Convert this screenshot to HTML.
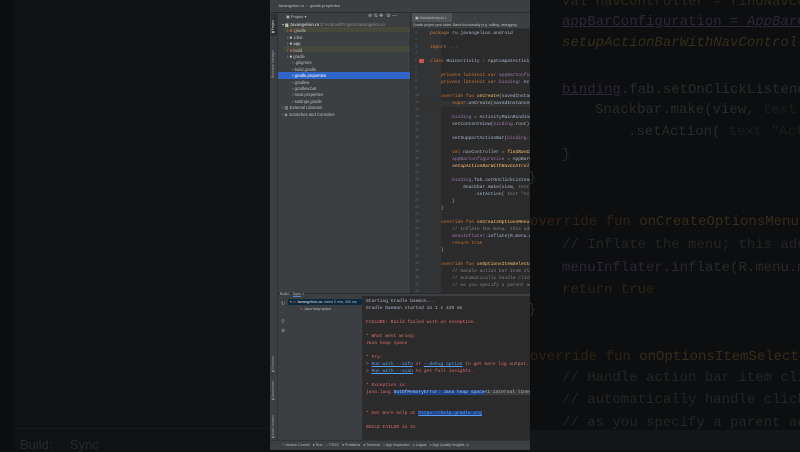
<!DOCTYPE html>
<html><head><meta charset="utf-8"><style>
*{margin:0;padding:0;box-sizing:border-box}
body{width:800px;height:450px;overflow:hidden;background:#0e1213;position:relative;font-family:"Liberation Sans",sans-serif}
.a{position:absolute;white-space:nowrap}
.m{font-family:"Liberation Mono",monospace}
.c{font-size:4.6px;line-height:7px;color:#a9b7c6}
.k{color:#cc7832}.f{color:#ffc66d}.g{color:#808080}.p{color:#9876aa}.s{color:#6a8759}
.t{font-size:4.2px;color:#bbbbbb}
.r{color:#e06c6c}.l{color:#589df6;text-decoration:underline}
.R{font-size:14px;line-height:20px}
</style></head><body>
<!-- left blurred side -->
<div class="a" style="left:0;top:0;width:14px;height:450px;background:#0b0e0f"></div>
<div class="a" style="left:16px;top:428px;width:254px;height:1px;background:#15191a"></div>
<div class="a" style="left:20px;top:437px;font-size:13px;color:#26292b">Build:</div>
<div class="a" style="left:70px;top:437px;font-size:13px;color:#26292b">Sync</div>
<!-- right blurred side -->
<div class="a" style="left:530px;top:0;width:270px;height:450px;background:#0c0e0f"></div>
<div class="a" style="left:530px;top:430px;width:270px;height:20px;background:#131618"></div>
<div class="a m R" style="left:562px;top:-8px;color:#2e2516">val navController = findNavCon</div>
<div class="a m R" style="left:562px;top:12px;color:#2e2536;text-decoration:underline">appBarConfiguration <span style="color:#2a2a2a">=</span> <i>AppBarCo</i></div>
<div class="a m R" style="left:562px;top:33px;color:#362d18"><i>setupActionBarWithNavControlle</i></div>
<div class="a m R" style="left:562px;top:80px;color:#2a2a2a"><span style="color:#2e2536;text-decoration:underline">binding</span>.fab.setOnClickListener</div>
<div class="a m R" style="left:595px;top:100px;color:#2a2a2a">Snackbar.make(view, <span style="color:#1c1c1c">text "</span></div>
<div class="a m R" style="left:628px;top:122px;color:#2a2a2a">.setAction( <span style="color:#1c1c1c">text "Actio</span></div>
<div class="a m R" style="left:562px;top:145px;color:#2a2a2a">}</div>
<div class="a m R" style="left:528px;top:168px;color:#2a2a2a">}</div>
<div class="a m R" style="left:530px;top:212px;color:#302213">override fun <span style="color:#362d18">onCreateOptionsMenu(m</span></div>
<div class="a m R" style="left:562px;top:235px;color:#242424">// Inflate the menu; this adds</div>
<div class="a m R" style="left:562px;top:258px;color:#2a2a2a"><span style="color:#2e2536">menuInflater</span>.inflate(R.menu.me</div>
<div class="a m R" style="left:562px;top:280px;color:#302213">return true</div>
<div class="a m R" style="left:528px;top:300px;color:#2a2a2a">}</div>
<div class="a m R" style="left:530px;top:347px;color:#302213">override fun <span style="color:#362d18">onOptionsItemSelected</span></div>
<div class="a m R" style="left:562px;top:368px;color:#242424">// Handle action bar item clic</div>
<div class="a m R" style="left:562px;top:390px;color:#242424">// automatically handle clicks</div>
<div class="a m R" style="left:562px;top:413px;color:#242424">// as you specify a parent act</div>

<!-- center IDE -->
<div class="a" style="left:270px;top:0;width:260px;height:450px;background:#3c3f41;overflow:hidden">
 <div class="a t" style="left:8px;top:3px;font-size:4px">Javangelion.ru &nbsp;› &nbsp;gradle.properties</div>
 <div class="a" style="left:0;top:12px;width:260px;height:1px;background:#2b2b2b"></div>
 <div class="a" style="left:0;top:13px;width:8px;height:430px;background:#3c3f41;border-right:1px solid #323232"></div>
 <div class="a" style="left:1px;top:14px;width:6px;height:22px;background:#2d2f30"></div>
 <div class="a t" style="left:16px;top:14px;font-size:4px">▣ Project ▾</div>
 <div class="a t" style="left:98px;top:13px;font-size:5px;color:#aaa">⊕ ⇅ ✚ &nbsp;⚙ —</div>
 <div class="a" style="left:140px;top:13px;width:1px;height:280px;background:#2b2b2b"></div>
 <div class="a" style="left:14px;top:27px;width:126px;height:5px;background:#45483a"></div>
 <div class="a" style="left:14px;top:46px;width:126px;height:6px;background:#45483a"></div>
 <div class="a" style="left:8px;top:72px;width:132px;height:6.5px;background:#2f65ca"></div>
 <div class="a t" style="left:12px;top:22px;line-height:6.4px">
  <div>▾ ▆ <b>Javangelion.ru</b> <span style="color:#888">D:\Android\Projects\Javangelion.ru</span></div>
  <div style="padding-left:5px">› <span style="color:#c75450">■</span> .gradle</div>
  <div style="padding-left:5px">› ■ .idea</div>
  <div style="padding-left:5px">› ■ <b>app</b></div>
  <div style="padding-left:5px">› <span style="color:#c75450">■</span> build</div>
  <div style="padding-left:5px">› ■ gradle</div>
  <div style="padding-left:10px">▫ .gitignore</div>
  <div style="padding-left:10px">▫ build.gradle</div>
  <div style="padding-left:10px;color:#fff">▫ gradle.properties</div>
  <div style="padding-left:10px">▫ gradlew</div>
  <div style="padding-left:10px">▫ gradlew.bat</div>
  <div style="padding-left:10px">▫ local.properties</div>
  <div style="padding-left:10px">▫ settings.gradle</div>
  <div>› ▥ External Libraries</div>
  <div>› ◈ Scratches and Consoles</div>
 </div>
 <div class="a" style="left:141px;top:13px;width:119px;height:280px;background:#2b2b2b"></div>
 <div class="a" style="left:141px;top:13px;width:119px;height:9px;background:#3c3f41"></div>
 <div class="a t" style="left:142px;top:13px;width:40px;height:9px;background:#4e5254;padding:2px 3px;font-size:3.8px">▣ MainActivity.kt ×</div>
 <div class="a" style="left:141px;top:22px;width:119px;height:7px;background:#3c3f41;border-bottom:1px solid #323232"></div>
 <div class="a t" style="left:143px;top:23px;font-size:3.4px;color:#bbb">Gradle project sync failed. Basic functionality (e.g. editing, debugging</div>
 <div class="a" style="left:141px;top:29px;width:30px;height:264px;background:#313335"></div>
 <div class="a" style="left:141px;top:101px;width:119px;height:6px;background:#323232"></div>
 <div class="a m g" style="left:145px;top:30px;font-size:3.5px;line-height:7px;color:#606366">1<br>2<br>3<br>4<br>5<br>6<br>7<br>8<br>9<br>10<br>11<br>12<br>13<br>14<br>15<br>16<br>17<br>18<br>19<br>20<br>21<br>22<br>23<br>24<br>25<br>26<br>27<br>28<br>29<br>30<br>31<br>32<br>33<br>34<br>35<br>36<br>37<br>38</div>
 <div class="a" style="left:149px;top:59px;width:5px;height:4px;background:#c75450"></div>
 <div class="a m c" style="left:160px;top:30px">
  <div><span class="k">package</span> ru.javangelion.android</div><div>&nbsp;</div>
  <div><span class="k">import</span> <span class="g">...</span></div><div>&nbsp;</div>
  <div><span class="k">class</span> MainActivity : AppCompatActivity()</div><div>&nbsp;</div>
  <div>&nbsp;&nbsp;&nbsp;&nbsp;<span class="k">private lateinit var</span> <span class="p">appBarConfig</span></div>
  <div>&nbsp;&nbsp;&nbsp;&nbsp;<span class="k">private lateinit var</span> <span class="p">binding</span>: Activ</div><div>&nbsp;</div>
  <div>&nbsp;&nbsp;&nbsp;&nbsp;<span class="k">override fun</span> <span class="f">onCreate</span>(savedInstance</div>
  <div>&nbsp;&nbsp;&nbsp;&nbsp;&nbsp;&nbsp;&nbsp;&nbsp;<span class="k">super</span>.onCreate(savedInstanceSt</div><div>&nbsp;</div>
  <div>&nbsp;&nbsp;&nbsp;&nbsp;&nbsp;&nbsp;&nbsp;&nbsp;<span class="p">binding</span> = ActivityMainBinding.i</div>
  <div>&nbsp;&nbsp;&nbsp;&nbsp;&nbsp;&nbsp;&nbsp;&nbsp;setContentView(<span class="p">binding</span>.root)</div><div>&nbsp;</div>
  <div>&nbsp;&nbsp;&nbsp;&nbsp;&nbsp;&nbsp;&nbsp;&nbsp;setSupportActionBar(<span class="p">binding</span>.too</div><div>&nbsp;</div>
  <div>&nbsp;&nbsp;&nbsp;&nbsp;&nbsp;&nbsp;&nbsp;&nbsp;<span class="k">val</span> navController = <i class="f">findNavCon</i></div>
  <div>&nbsp;&nbsp;&nbsp;&nbsp;&nbsp;&nbsp;&nbsp;&nbsp;<span class="p">appBarConfiguration</span> = AppBarCon</div>
  <div>&nbsp;&nbsp;&nbsp;&nbsp;&nbsp;&nbsp;&nbsp;&nbsp;<i class="f">setupActionBarWithNavControlle</i></div><div>&nbsp;</div>
  <div>&nbsp;&nbsp;&nbsp;&nbsp;&nbsp;&nbsp;&nbsp;&nbsp;<span class="p">binding</span>.fab.setOnClickListener</div>
  <div>&nbsp;&nbsp;&nbsp;&nbsp;&nbsp;&nbsp;&nbsp;&nbsp;&nbsp;&nbsp;&nbsp;&nbsp;Snackbar.make(view, <span class="g">text "</span></div>
  <div>&nbsp;&nbsp;&nbsp;&nbsp;&nbsp;&nbsp;&nbsp;&nbsp;&nbsp;&nbsp;&nbsp;&nbsp;&nbsp;&nbsp;&nbsp;&nbsp;.setAction( <span class="g">text "Actio</span></div>
  <div>&nbsp;&nbsp;&nbsp;&nbsp;&nbsp;&nbsp;&nbsp;&nbsp;}</div>
  <div>&nbsp;&nbsp;&nbsp;&nbsp;}</div><div>&nbsp;</div>
  <div>&nbsp;&nbsp;&nbsp;&nbsp;<span class="k">override fun</span> <span class="f">onCreateOptionsMenu</span>(m</div>
  <div>&nbsp;&nbsp;&nbsp;&nbsp;&nbsp;&nbsp;&nbsp;&nbsp;<span class="g">// Inflate the menu; this adds</span></div>
  <div>&nbsp;&nbsp;&nbsp;&nbsp;&nbsp;&nbsp;&nbsp;&nbsp;<span class="p">menuInflater</span>.inflate(R.menu.me</div>
  <div>&nbsp;&nbsp;&nbsp;&nbsp;&nbsp;&nbsp;&nbsp;&nbsp;<span class="k">return true</span></div>
  <div>&nbsp;&nbsp;&nbsp;&nbsp;}</div><div>&nbsp;</div>
  <div>&nbsp;&nbsp;&nbsp;&nbsp;<span class="k">override fun</span> <span class="f">onOptionsItemSelected</span></div>
  <div>&nbsp;&nbsp;&nbsp;&nbsp;&nbsp;&nbsp;&nbsp;&nbsp;<span class="g">// Handle action bar item clic</span></div>
  <div>&nbsp;&nbsp;&nbsp;&nbsp;&nbsp;&nbsp;&nbsp;&nbsp;<span class="g">// automatically handle clicks</span></div>
  <div>&nbsp;&nbsp;&nbsp;&nbsp;&nbsp;&nbsp;&nbsp;&nbsp;<span class="g">// as you specify a parent act</span></div>
 </div>
 <div class="a" style="left:8px;top:293px;width:252px;height:1px;background:#2b2b2b"></div>
 <div class="a t" style="left:10px;top:292px;font-size:3.8px">Build: &nbsp;&nbsp;<span style="border-bottom:1px solid #4a88c7">Sync</span> ×</div>
 <div class="a t" style="left:11px;top:300px;font-size:5px;line-height:9px;color:#999">↻<br>·<br>⚲<br>⊕</div>
 <div class="a" style="left:18px;top:299px;width:74px;height:6px;background:#0d293e"></div>
 <div class="a t" style="left:20px;top:299px;font-size:3.6px;line-height:6.5px">
  <div>▾ <span style="color:#c75450">⊘</span> <b>Javangelion.ru:</b> failed 2 min, 409 ms</div>
  <div style="padding-left:10px"><span style="color:#c75450">⊘</span> Java heap space</div>
 </div>
 <div class="a" style="left:92px;top:296px;width:168px;height:147px;background:#2b2b2b"></div>
 <div class="a m c" style="left:96px;top:298px;line-height:7px;font-size:4.6px">
  <div>Starting Gradle Daemon...</div>
  <div>Gradle Daemon started in 1 s 439 ms</div><div>&nbsp;</div>
  <div class="r">FAILURE: Build failed with an exception.</div><div>&nbsp;</div>
  <div class="r">* What went wrong:</div>
  <div class="r">Java heap space</div><div>&nbsp;</div>
  <div class="r">* Try:</div>
  <div class="r">&gt; <span class="l">Run with --info</span> or <span class="l">--debug option</span> to get more log output.</div>
  <div class="r">&gt; <span class="l">Run with --scan</span> to get full insights.</div><div>&nbsp;</div>
  <div class="r">* Exception is:</div>
  <div class="r">java.lang.<span style="background:#214283;color:#a9c4ee">OutOfMemoryError: Java heap space</span><span style="background:#3c3f41;color:#aaa">&lt;1 internal lines&gt;</span></div><div>&nbsp;</div><div>&nbsp;</div>
  <div class="r">* Get more help at <span class="l" style="background:#214283">https://help.gradle.org</span></div><div>&nbsp;</div>
  <div class="r">BUILD FAILED in 2s</div>
 </div>
 <div class="a t" style="font-size:3.3px;color:#999;transform:rotate(-90deg);transform-origin:left top;top:372px;left:1px">▮ Structure</div>
 <div class="a t" style="font-size:3.3px;color:#999;transform:rotate(-90deg);transform-origin:left top;top:400px;left:1px">▮ Bookmarks</div>
 <div class="a t" style="font-size:3.3px;color:#999;transform:rotate(-90deg);transform-origin:left top;top:438px;left:1px">▮ Build Variants</div>
 <div class="a t" style="font-size:3.3px;color:#999;transform:rotate(-90deg);transform-origin:left top;top:78px;left:1px">Resource Manager</div>
 <div class="a t" style="font-size:3.3px;color:#ddd;transform:rotate(-90deg);transform-origin:left top;top:33px;left:1px">▮ Project</div>
 <div class="a" style="left:0;top:440px;width:260px;height:10px;background:#3c3f41;border-top:1px solid #323232"></div>
 <div class="a t" style="left:12px;top:443px;font-size:3.6px;color:#bbb">⑂ Version Control &nbsp;&nbsp;▶ Run &nbsp;&nbsp;☰ TODO &nbsp;&nbsp;● Problems &nbsp;&nbsp;▣ Terminal &nbsp;&nbsp;⚱ App Inspection &nbsp;&nbsp;▤ Logcat &nbsp;&nbsp;◈ App Quality Insights &nbsp;⚙</div>
</div>
</body></html>
